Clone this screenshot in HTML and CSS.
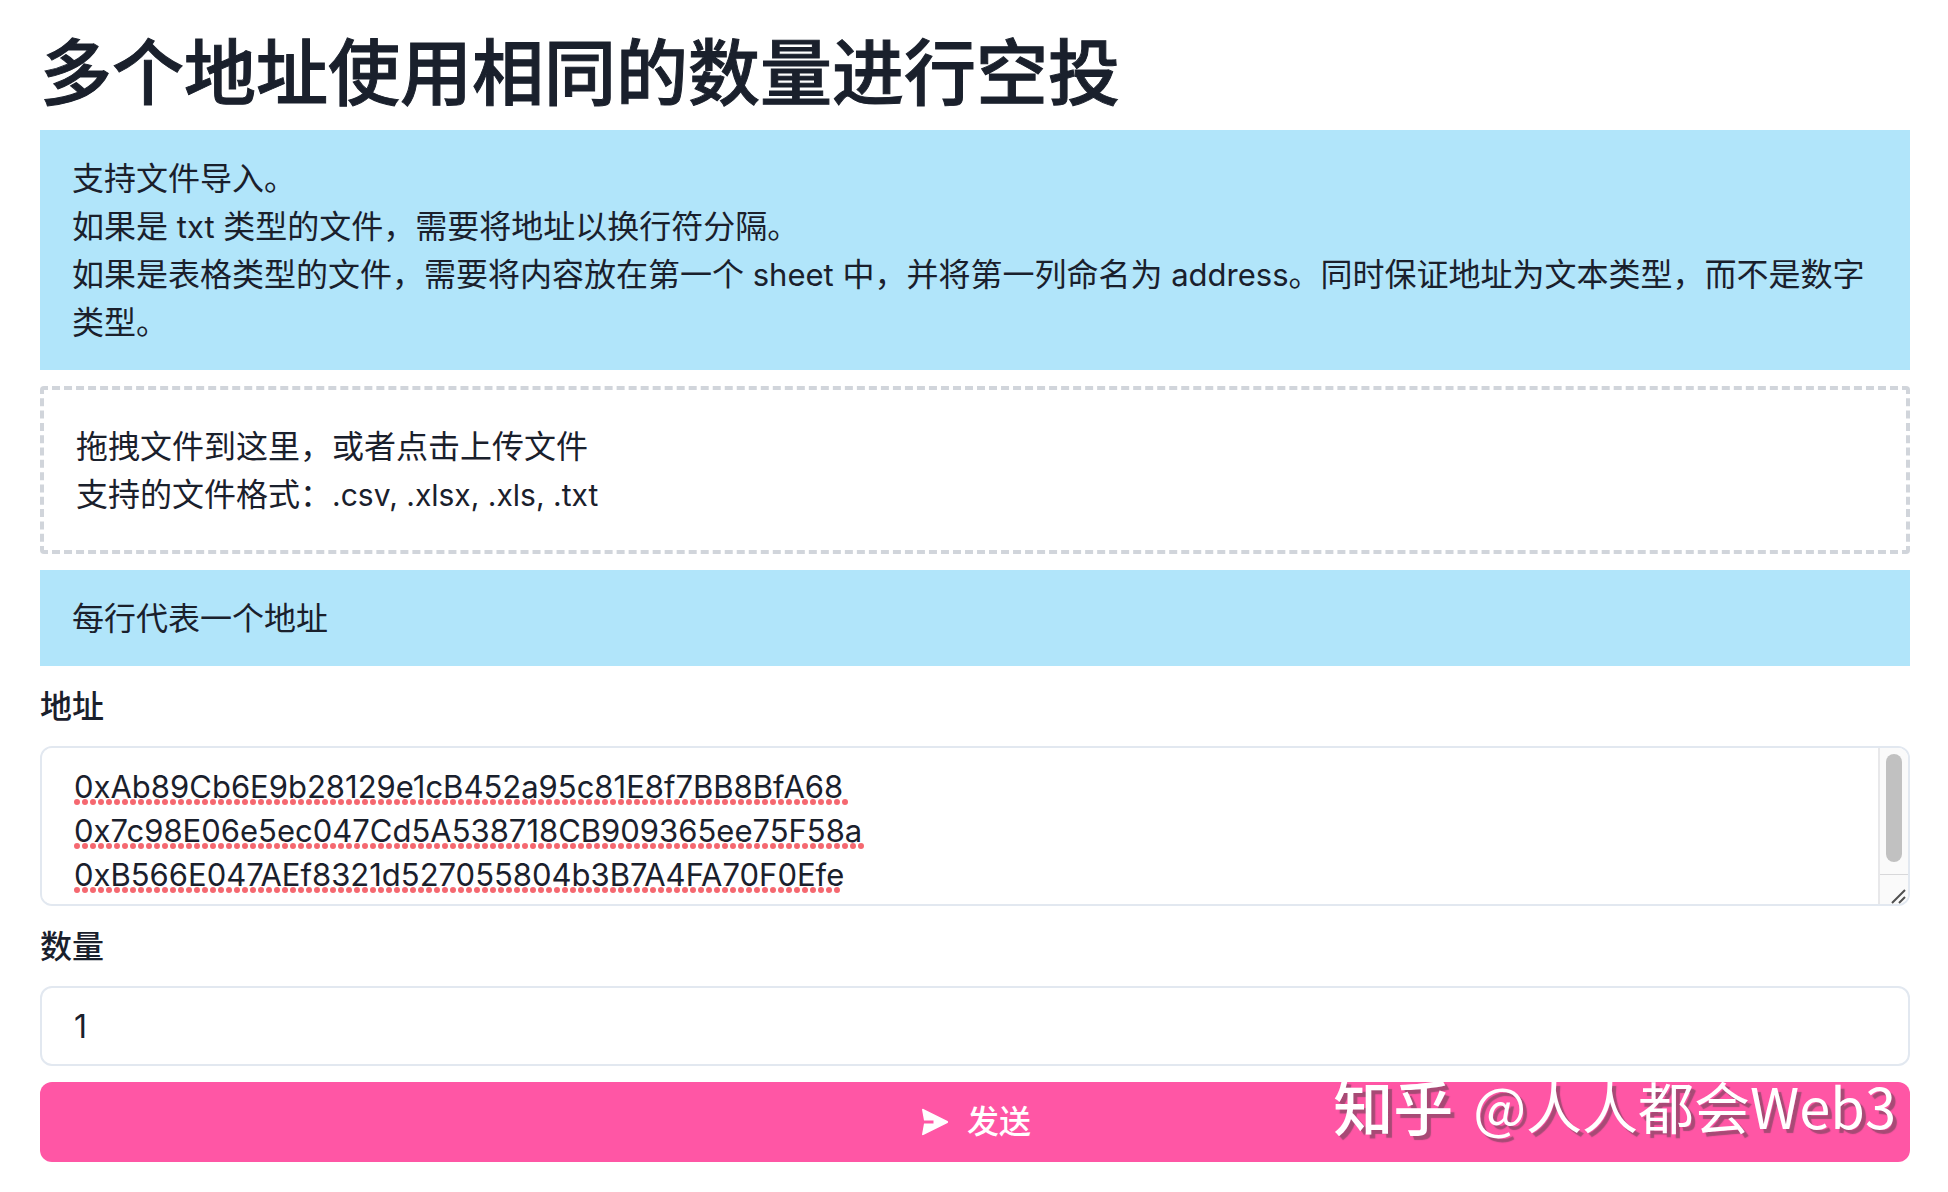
FILE: index.html
```html
<!DOCTYPE html>
<html lang="zh-CN">
<head>
<meta charset="utf-8">
<meta name="viewport" content="width=device-width, initial-scale=1">
<title>空投</title>
<link rel="stylesheet" href="styles.css">
</head>
<body>
<main class="page">
  <h1 class="title">多个地址使用相同的数量进行空投</h1>
  <div class="notice">
    <p>支持文件导入。</p>
    <p>如果是<span class="latin"> txt </span>类型的文件，需要将地址以换行符分隔。</p>
    <p>如果是表格类型的文件，需要将内容放在第一个<span class="latin"> sheet </span>中，并将第一列命名为<span class="latin"> address</span>。同时保证地址为文本类型，而不是数字类型。</p>
  </div>
  <button class="dropzone" type="button">
    <span>拖拽文件到这里，或者点击上传文件</span>
    <span>支持的文件格式：<span class="formats">.csv, .xlsx, .xls, .txt</span></span>
  </button>
  <div class="notice">
    <p>每行代表一个地址</p>
  </div>
  <form class="form">
    <label class="label" for="addresses">地址</label>
    <div class="area-wrap">
      <textarea class="field field-area" id="addresses" spellcheck="false">0xAb89Cb6E9b28129e1cB452a95c81E8f7BB8BfA68
0x7c98E06e5ec047Cd5A538718CB909365ee75F58a
0xB566E047AEf8321d527055804b3B7A4FA70F0Efe</textarea>
      <div class="scrollbar" aria-hidden="true">
        <div class="track"><div class="thumb"></div></div>
        <svg class="grip" viewBox="0 0 28 29"><path d="M12 28L25 15M19 28L25 22"/></svg>
      </div>
    </div>
    <label class="label" for="amount">数量</label>
    <input class="field field-line" id="amount" type="text" value="1">
    <div class="submit-row">
      <button class="submit" type="button">
        <svg class="send" viewBox="0 0 32 32" aria-hidden="true"><path d="M3 3.600C3 2.900 3.800 2.600 4.400 2.900L28.600 15.100C29.300 15.500 29.300 16.500 28.600 16.900L4.400 29.100C3.800 29.400 3 29.100 3 28.400L5 17.600H14.500V14.400H5Z"/></svg>
        <span>发送</span>
      </button>
      <div class="watermark"><b class="brand">知乎</b><span>@人人都会Web3</span></div>
    </div>
  </form>
</main>
</body>
</html>
```
FILE: styles.css
```css
* {
  box-sizing: border-box;
}

body {
  margin: 0;
  background: #fff;
  color: #1a202c;
  font: 400 32px/48px Inter, "Noto Sans CJK SC", sans-serif;
}

p {
  margin: 0;
}

.page {
  display: flex;
  flex-direction: column;
  gap: 16px;
  padding: 32px 38px 28px 40px;
}

.title {
  margin: 0;
  font-size: 72px;
  line-height: 82px;
  font-weight: 500;
  -webkit-text-stroke: 1px currentColor;
}

.notice {
  padding: 25px 32px 23px;
  background: #b1e5fa;
}

.latin {
  font-size: 31px;
}

.formats {
  font-size: 30px;
}

.dropzone {
  display: flex;
  flex-direction: column;
  align-items: flex-start;
  padding: 33px 32px 31px;
  border: 4px dashed #d1d5db;
  border-radius: 4px;
  background: #fff;
  color: inherit;
  font: inherit;
  text-align: left;
}

.form {
  display: flex;
  flex-direction: column;
  gap: 16px;
}

.label {
  padding-top: 1px;
  margin-bottom: -1px;
  font-weight: 500;
}

.field {
  width: 100%;
  border: 2px solid #e2e8f0;
  border-radius: 12px;
  background-color: #fff;
  color: inherit;
  font: inherit;
  outline: 0;
}

.field-line {
  height: 80px;
  padding: 0 32px;
}

.area-wrap {
  position: relative;
}

.field-area {
  display: block;
  height: 160px;
  padding: 17px 62px 15px 32px;
  font-size: 31px;
  line-height: 44px;
  resize: none;
  background-image: url("data:image/svg+xml,%3Csvg xmlns='http://www.w3.org/2000/svg' width='830' height='164'%3E%3Cg stroke='%23f56870' stroke-width='6' stroke-linecap='round' stroke-dasharray='0 8'%3E%3Cpath d='M35 54H808M35 98H822M35 142H802'/%3E%3C/g%3E%3C/svg%3E");
  background-repeat: no-repeat;
  background-attachment: local;
}

.scrollbar {
  position: absolute;
  top: 2px;
  right: 2px;
  bottom: 2px;
  display: flex;
  flex-direction: column;
  width: 30px;
  border-left: 2px solid #e8e8ea;
  border-radius: 0 10px 10px 0;
  background: #fafafa;
  pointer-events: none;
}

.track {
  flex: 1;
  padding: 6px;
}

.thumb {
  width: 16px;
  height: 108px;
  border-radius: 8px;
  background: #c1c1c1;
}

.grip {
  height: 30px;
  border-top: 1px solid #d8d8da;
  fill: none;
  stroke: #505050;
  stroke-width: 2;
}

.submit-row {
  position: relative;
}

.submit {
  display: flex;
  width: 100%;
  height: 80px;
  align-items: center;
  justify-content: center;
  gap: 16px;
  padding: 0;
  border: 0;
  border-radius: 12px;
  background: #ff56a5;
  color: #fff;
  font: inherit;
  font-weight: 500;
}

.send {
  width: 32px;
  height: 32px;
  fill: currentColor;
}

.watermark {
  position: absolute;
  top: -17px;
  right: 14px;
  display: flex;
  align-items: center;
  gap: 20px;
  color: #fff;
  font: 400 56px/80px "Noto Sans CJK SC", sans-serif;
  text-shadow: 4px 4px 1px rgba(60, 60, 60, 0.45);
  pointer-events: none;
}

.brand {
  font-size: 60px;
  font-weight: 500;
}
```
